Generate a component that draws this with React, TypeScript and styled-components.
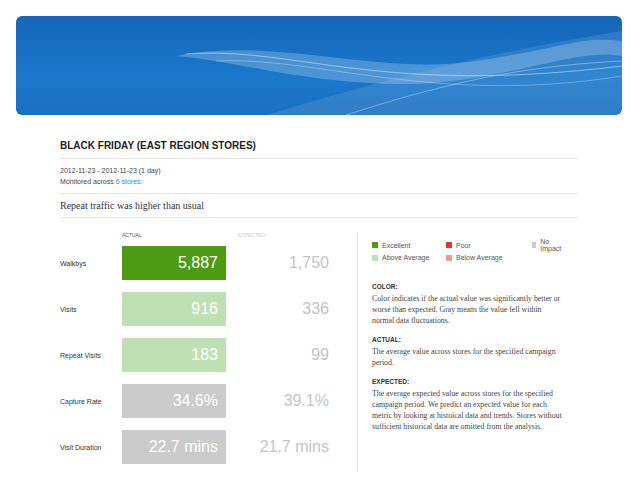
import React from 'react';
import styled, { createGlobalStyle } from 'styled-components';

const Global = createGlobalStyle`
  body { margin: 0; background: #fff; font-family: "Liberation Sans", Arial, sans-serif; }
`;

const Page = styled.div`
  width: 638px;
  height: 478px;
  padding: 16px;
  box-sizing: border-box;
  overflow: hidden;
`;

const Banner = styled.div`
  height: 99px;
  border-radius: 6px;
  overflow: hidden;
  background: linear-gradient(180deg, #1565b8 0%, #1a78cc 60%, #1b6fc0 100%);
`;

const Content = styled.div`
  padding: 25px 44px 0 44px;
`;

const Title = styled.div`
  font-size: 10px;
  font-weight: 700;
  color: #222;
  padding-bottom: 7px;
  border-bottom: 1px solid #e6e6e6;
`;

const Meta = styled.div`
  font-size: 7px;
  color: #444;
  line-height: 11px;
  padding: 6px 0 6px;
  border-bottom: 1px solid #e6e6e6;
  a { color: #2a8fd6; text-decoration: none; }
`;

const Headline = styled.div`
  font-family: "Liberation Serif", serif;
  font-size: 10px;
  color: #333;
  padding: 6px 0 6px;
  border-bottom: 1px solid #e6e6e6;
`;

const Split = styled.div`
  display: grid;
  grid-template-columns: 298px 1fr;
  margin-top: 14px;
`;

const Table = styled.div`
  border-right: 1px solid #e0e0e0;
  padding-right: 28px;
  height: 240px;
`;

const HeadRow = styled.div`
  display: grid;
  grid-template-columns: 62px 104px 1fr;
  font-size: 5px;
  color: #555;
  height: 14px;
`;

const Row = styled.div`
  display: grid;
  grid-template-columns: 62px 104px 1fr;
  align-items: center;
  height: 34px;
  margin-bottom: 12px;
`;

const Label = styled.div`
  font-size: 7px;
  color: #333;
`;

const Actual = styled.div<{ $bg: string }>`
  background: ${p => p.$bg};
  height: 34px;
  color: #fff;
  font-size: 16px;
  display: flex;
  align-items: center;
  justify-content: flex-end;
  padding-right: 8px;
`;

const Expected = styled.div`
  font-size: 16px;
  color: #c4c4c4;
  text-align: right;
`;

const Side = styled.div`
  padding: 6px 20px 0 14px;
`;

const Legend = styled.div`
  display: grid;
  grid-template-columns: 74px 86px 1fr;
  row-gap: 2px;
  font-size: 7px;
  color: #555;
  margin-bottom: 22px;
`;

const Key = styled.div<{ $c: string }>`
  display: flex;
  align-items: center;
  gap: 4px;
  &::before { content: ""; width: 6px; height: 6px; background: ${p => p.$c}; }
`;

const Head = styled.div`
  font-size: 6.5px;
  font-weight: 700;
  color: #333;
  margin-bottom: 3px;
`;

const Body = styled.div`
  font-family: "Liberation Serif", serif;
  font-size: 7.8px;
  line-height: 11px;
  color: #444;
  margin-bottom: 10px;
`;

const rows = [
  { l: 'Walkbys', a: '5,887', e: '1,750', c: '#4d9b12' },
  { l: 'Visits', a: '916', e: '336', c: '#bfe0b4' },
  { l: 'Repeat Visits', a: '183', e: '99', c: '#bfe0b4' },
  { l: 'Capture Rate', a: '34.6%', e: '39.1%', c: '#cbcbcb' },
  { l: 'Visit Duration', a: '22.7 mins', e: '21.7 mins', c: '#cbcbcb' },
];

export default function App() {
  return (
    <Page>
      <Global />
      <Banner>
        <svg width="606" height="99" viewBox="0 0 606 99">
          <path d="M160 40 C260 20 360 60 460 45 S560 20 606 25 L606 40 C560 30 480 70 380 68 C280 66 220 45 160 40Z" fill="rgba(255,255,255,0.22)" />
          <path d="M170 38 C280 30 360 80 606 50" stroke="rgba(255,255,255,0.45)" fill="none" />
          <path d="M200 45 C300 40 420 90 606 60" stroke="rgba(255,255,255,0.3)" fill="none" />
          <path d="M250 99 C350 70 450 40 606 15 L606 99Z" fill="rgba(255,255,255,0.1)" />
          <path d="M330 99 C420 70 500 50 606 45" stroke="rgba(255,255,255,0.35)" fill="none" />
        </svg>
      </Banner>
      <Content>
        <Title>BLACK FRIDAY (EAST REGION STORES)</Title>
        <Meta>
          2012-11-23 - 2012-11-23 (1 day)<br />
          Monitored across <a>6 stores:</a>
        </Meta>
        <Headline>Repeat traffic was higher than usual</Headline>
        <Split>
          <Table>
            <HeadRow>
              <span />
              <span>ACTUAL</span>
              <span style={{ color: '#ccc', paddingLeft: 12 }}>EXPECTED</span>
            </HeadRow>
            {rows.map(r => (
              <Row key={r.l}>
                <Label>{r.l}</Label>
                <Actual $bg={r.c}>{r.a}</Actual>
                <Expected>{r.e}</Expected>
              </Row>
            ))}
          </Table>
          <Side>
            <Legend>
              <Key $c="#4d9b12">Excellent</Key>
              <Key $c="#e0392b">Poor</Key>
              <Key $c="#cccccc">No Impact</Key>
              <Key $c="#bfe0b4">Above Average</Key>
              <Key $c="#ee9a9a">Below Average</Key>
            </Legend>
            <Head>COLOR:</Head>
            <Body>Color indicates if the actual value was significantly better or worse than expected. Gray means the value fell within normal data fluctuations.</Body>
            <Head>ACTUAL:</Head>
            <Body>The average value across stores for the specified campaign period.</Body>
            <Head>EXPECTED:</Head>
            <Body>The average expected value across stores for the specified campaign period. We predict an expected value for each metric by looking at histoical data and trends. Stores without sufficient historical data are omitted from the analysis.</Body>
          </Side>
        </Split>
      </Content>
    </Page>
  );
}
